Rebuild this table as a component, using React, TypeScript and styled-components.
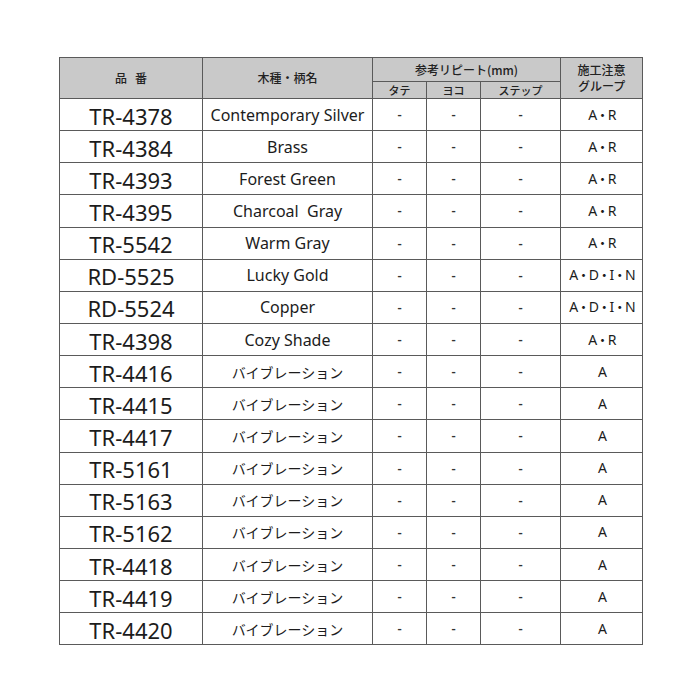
import React from "react";
import styled, { createGlobalStyle } from "styled-components";

const GlobalStyle = createGlobalStyle`
  html, body {
    margin: 0;
    padding: 0;
    background: #ffffff;
  }
  body {
    font-family: "Noto Sans", "Noto Sans CJK JP", sans-serif;
    color: #1a1a1a;
  }
`;

const Page = styled.div`
  width: 700px;
  height: 700px;
  padding: 57px 0 0 59px;
  box-sizing: border-box;
`;

const Table = styled.table`
  border-collapse: collapse;
  table-layout: fixed;
  width: 583px;
  border: 1px solid #555555;
`;

const HeadCell = styled.th<{ $sub?: boolean }>`
  background: #c9c9c9;
  border: 1px solid #5a5a5a;
  font-family: "Noto Sans CJK JP", sans-serif;
  font-weight: 500;
  font-size: ${(p) => (p.$sub ? "11px" : "12px")};
  line-height: 16px;
  color: #222222;
  padding: 0;
  height: ${(p) => (p.$sub ? "14px" : "23px")};
  text-align: center;
  vertical-align: middle;
`;

const Row = styled.tr`
  height: 32.15px;
`;

const Cell = styled.td<{ $kind: "code" | "name" | "dash" | "group" }>`
  border: 1px solid #5a5a5a;
  padding: 0;
  text-align: center;
  vertical-align: middle;
  line-height: 1;
  font-family: ${(p) =>
    p.$kind === "name" || p.$kind === "group"
      ? `"Noto Sans", "Noto Sans CJK JP", sans-serif`
      : `"Noto Sans", sans-serif`};
  font-size: ${(p) =>
    p.$kind === "code" ? "22px" : p.$kind === "name" ? "16px" : p.$kind === "group" ? "14px" : "13px"};
  font-weight: ${(p) => (p.$kind === "dash" ? 600 : 400)};
  color: ${(p) => (p.$kind === "dash" ? "#333333" : "#1c1c1c")};
  letter-spacing: ${(p) => (p.$kind === "group" ? "-0.12em" : "0")};
  padding-top: ${(p) => (p.$kind === "code" ? "2px" : "0")};
`;

const JpName = styled.span`
  font-family: "Noto Sans CJK JP", sans-serif;
  font-size: 14px;
`;

type Item = { code: string; name: string; group: string; jp?: boolean };

const VIB = "バイブレーション";

const items: Item[] = [
  { code: "TR-4378", name: "Contemporary Silver", group: "A・R" },
  { code: "TR-4384", name: "Brass", group: "A・R" },
  { code: "TR-4393", name: "Forest Green", group: "A・R" },
  { code: "TR-4395", name: "Charcoal\u00a0 Gray", group: "A・R" },
  { code: "TR-5542", name: "Warm Gray", group: "A・R" },
  { code: "RD-5525", name: "Lucky Gold", group: "A・D・I・N" },
  { code: "RD-5524", name: "Copper", group: "A・D・I・N" },
  { code: "TR-4398", name: "Cozy Shade", group: "A・R" },
  { code: "TR-4416", name: VIB, group: "A", jp: true },
  { code: "TR-4415", name: VIB, group: "A", jp: true },
  { code: "TR-4417", name: VIB, group: "A", jp: true },
  { code: "TR-5161", name: VIB, group: "A", jp: true },
  { code: "TR-5163", name: VIB, group: "A", jp: true },
  { code: "TR-5162", name: VIB, group: "A", jp: true },
  { code: "TR-4418", name: VIB, group: "A", jp: true },
  { code: "TR-4419", name: VIB, group: "A", jp: true },
  { code: "TR-4420", name: VIB, group: "A", jp: true },
];

export default function App() {
  return (
    <Page>
      <GlobalStyle />
      <Table>
        <colgroup>
          <col style={{ width: 143 }} />
          <col style={{ width: 170 }} />
          <col style={{ width: 54 }} />
          <col style={{ width: 54 }} />
          <col style={{ width: 80 }} />
          <col style={{ width: 82 }} />
        </colgroup>
        <thead>
          <tr>
            <HeadCell rowSpan={2}>品&nbsp;&nbsp;&nbsp;番</HeadCell>
            <HeadCell rowSpan={2}>木種・柄名</HeadCell>
            <HeadCell colSpan={3}>参考リピート(mm)</HeadCell>
            <HeadCell rowSpan={2}>
              施工注意
              <br />
              グループ
            </HeadCell>
          </tr>
          <tr>
            <HeadCell $sub>タテ</HeadCell>
            <HeadCell $sub>ヨコ</HeadCell>
            <HeadCell $sub>ステップ</HeadCell>
          </tr>
        </thead>
        <tbody>
          {items.map((it) => (
            <Row key={it.code}>
              <Cell $kind="code">{it.code}</Cell>
              <Cell $kind="name">{it.jp ? <JpName>{it.name}</JpName> : it.name}</Cell>
              <Cell $kind="dash">-</Cell>
              <Cell $kind="dash">-</Cell>
              <Cell $kind="dash">-</Cell>
              <Cell $kind="group">{it.group}</Cell>
            </Row>
          ))}
        </tbody>
      </Table>
    </Page>
  );
}
